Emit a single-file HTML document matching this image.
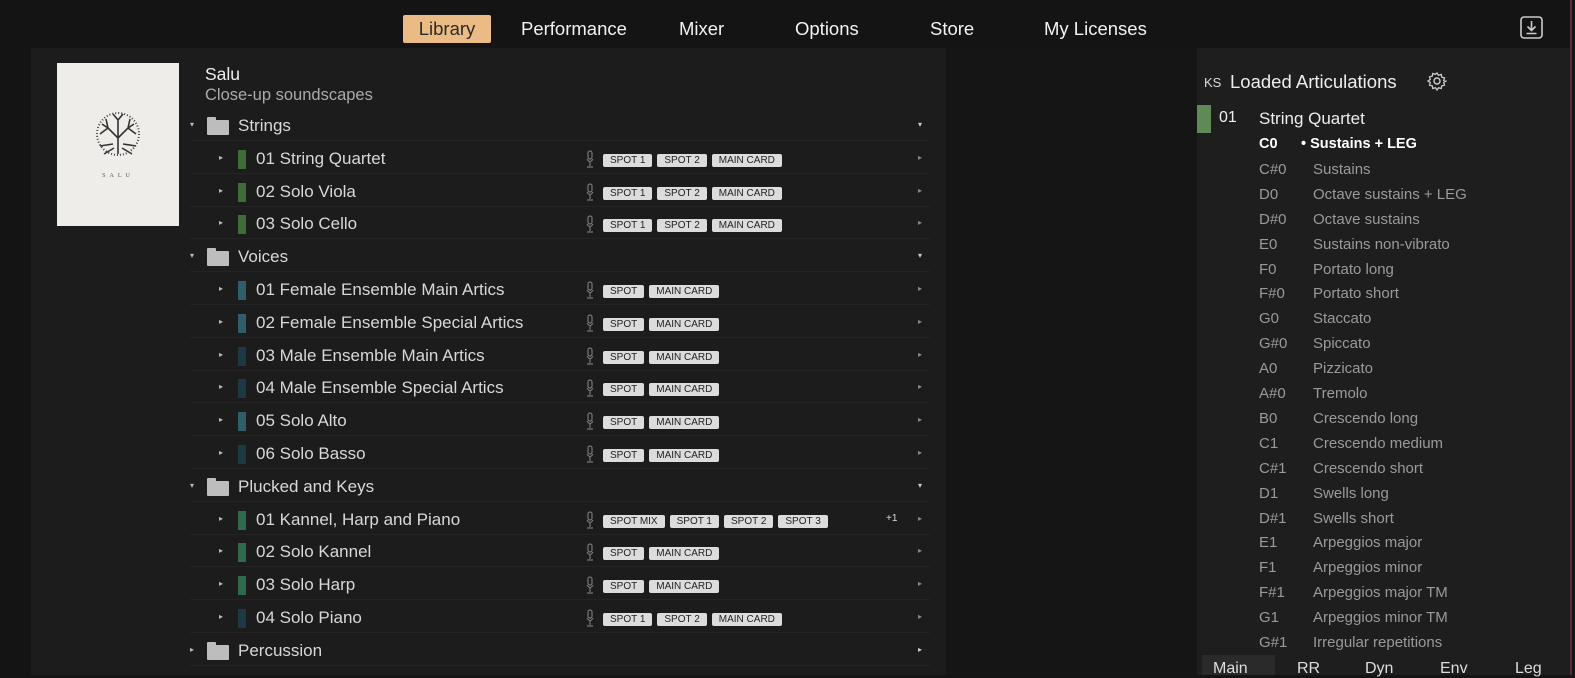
<!DOCTYPE html>
<html><head><meta charset="utf-8"><style>
*{margin:0;padding:0;box-sizing:border-box}
body{width:1575px;height:675px;overflow:hidden;background:#141414;font-family:"Liberation Sans",sans-serif;color:#e6e6e6;position:relative}
.a{position:absolute;white-space:nowrap}
.nav{top:15px;height:28px;line-height:28px;font-size:18.5px;color:#f2f2f2}
.main{left:31px;top:48px;width:915px;height:627px;background:#1c1c1c}
.right{left:1197px;top:48px;width:374px;height:627px;background:#1e1e1e}
.row{left:190px;width:740px;height:33px;border-bottom:1px solid #242424}
.row .t{position:absolute;left:66px;top:8px;font-size:17px;color:#d8d8d8}
.row .bar{position:absolute;left:48px;top:9px;width:8px;height:19px}
.row .tri{position:absolute;left:29px;top:12px;font-size:8px;color:#bbb}
.row .rt{position:absolute;right:8px;top:12px;font-size:8px;color:#888}
.row .mic{position:absolute;left:396px;top:9px;width:8px;height:18px}
.row .tags{position:absolute;left:413px;top:13px;display:flex;gap:5px}
.tag{background:#dcdcdc;color:#222;font-size:10px;height:13px;line-height:13px;padding:0 7px;border-radius:2px}
.fold .t{left:48px;color:#d8d8d8}
.fold .tri{left:0}
.folder{position:absolute;left:17px;top:12px;width:22px;height:15px;background:#bdbdbd;border-radius:1px}
.folder:before{content:"";position:absolute;left:0;top:-3px;width:9px;height:4px;background:#bdbdbd;border-radius:1px 1px 0 0}
.ar{left:1259px;font-size:15px;color:#9a9a9a}
.ar span{position:absolute;left:54px}
.tab{top:660px;font-size:16px;color:#ddd}
</style></head><body>
<div class="a main"></div>
<div class="a" style="left:946px;top:48px;width:251px;height:627px;background:#151515"></div>
<div class="a right"></div>
<div class="a" style="left:1570px;top:0;width:2px;height:675px;background:#5a2a40"></div>

<div class="a nav" style="left:403px;width:88px;background:#ebbb85;color:#2a2a2a;border-radius:2px;text-align:center">Library</div>
<div class="a nav" style="left:521px">Performance</div>
<div class="a nav" style="left:679px">Mixer</div>
<div class="a nav" style="left:795px">Options</div>
<div class="a nav" style="left:930px">Store</div>
<div class="a nav" style="left:1044px">My Licenses</div>
<svg class="a" style="left:1520px;top:16px" width="23" height="23" viewBox="0 0 23 23"><rect x="1" y="1" width="21" height="21" rx="3" fill="none" stroke="#ccc" stroke-width="1.6"/><path d="M11.5 5v9M7.5 10.5l4 4 4-4M6.5 17.5h10" fill="none" stroke="#ccc" stroke-width="1.6"/></svg>

<div class="a" style="left:57px;top:63px;width:122px;height:163px;background:#efedea">
<svg style="position:absolute;left:37px;top:47px" width="48" height="48" viewBox="0 0 48 48"><g stroke="#333" stroke-width="1.6" fill="none"><path d="M24 44V28M24 28l-10-10M24 28l10-10M14 18l-6-4M14 18l-2-9M34 18l6-4M34 18l2-9M24 28V10M24 10l-5-6M24 10l5-6M19 34l-13 2M29 34l13 2M20 38l-10 6M28 38l10 6M14 18l-8 6M34 18l8 6"/></g><circle cx="24" cy="24" r="21" fill="none" stroke="#444" stroke-width="2" stroke-dasharray="1 2"/></svg>
<div style="position:absolute;left:0;width:122px;top:110px;text-align:center;font-size:6px;letter-spacing:4px;color:#555;font-family:'Liberation Serif',serif">SALU</div>
</div>
<div class="a" style="left:205px;top:64px;font-size:17.5px;color:#eee">Salu</div>
<div class="a" style="left:205px;top:86px;font-size:16.5px;color:#aaa">Close-up soundscapes</div>

<div id="list"></div>

<div class="a" style="left:1204px;top:75px;font-size:13px;color:#ddd">KS</div>
<div class="a" style="left:1230px;top:71px;font-size:18.5px;color:#eee">Loaded Articulations</div>
<svg class="a" style="left:1427px;top:71px" width="20" height="20" viewBox="0 0 20 20"><circle cx="10" cy="10" r="3" fill="none" stroke="#ccc" stroke-width="1.4"/><path d="M10 2l1.5 2.3 2.7-.8.6 2.7 2.7.6-.8 2.7L19 10l-2.3 1.5.8 2.7-2.7.6-.6 2.7-2.7-.8L10 19l-1.5-2.3-2.7.8-.6-2.7-2.7-.6.8-2.7L1 10l2.3-1.5-.8-2.7 2.7-.6.6-2.7 2.7.8z" fill="none" stroke="#ccc" stroke-width="1.3"/></svg>
<div class="a" style="left:1197px;top:105px;width:14px;height:28px;background:#5f8a55"></div>
<div class="a" style="left:1219px;top:109px;font-size:16px;color:#eee">01</div>
<div class="a" style="left:1259px;top:109px;font-size:17px;color:#eee">String Quartet</div>
<div id="arts"></div>

<div class="a" style="left:1202px;top:655px;width:73px;height:20px;background:#2a2a2a"></div>
<div class="a tab" style="left:1213px">Main</div>
<div class="a tab" style="left:1297px">RR</div>
<div class="a tab" style="left:1365px">Dyn</div>
<div class="a tab" style="left:1440px">Env</div>
<div class="a tab" style="left:1515px">Leg</div>

<script>
const G='#3f6b38',T='#2f5d68',D='#1f3943',P='#2e6a4c';
const S3=['SPOT 1','SPOT 2','MAIN CARD'],S2=['SPOT','MAIN CARD'];
const rows=[
['f','Strings','▾'],['r','01 String Quartet',G,S3],['r','02 Solo Viola',G,S3],['r','03 Solo Cello',G,S3],
['f','Voices','▾'],['r','01 Female Ensemble Main Artics',T,S2],['r','02 Female Ensemble Special Artics',T,S2],['r','03 Male Ensemble Main Artics',D,S2],['r','04 Male Ensemble Special Artics',D,S2],['r','05 Solo Alto',T,S2],['r','06 Solo Basso',D,S2],
['f','Plucked and Keys','▾'],['r','01  Kannel, Harp and Piano',P,['SPOT MIX','SPOT 1','SPOT 2','SPOT 3'],1],['r','02 Solo Kannel',P,S2],['r','03 Solo Harp',P,S2],['r','04 Solo Piano',D,S3],
['f','Percussion','▸']];
let h='';
rows.forEach((r,i)=>{const y=108+i*32.8;
if(r[0]=='f'){h+=`<div class="a row fold" style="top:${y}px"><span class="tri">${r[2]}</span><div class="folder"></div><span class="t">${r[1]}</span><span class="rt" style="color:#ccc">${r[2]=='▾'?'▾':'▸'}</span></div>`}
else{h+=`<div class="a row" style="top:${y}px"><span class="tri">▸</span><div class="bar" style="background:${r[2]}"></div><span class="t">${r[1]}</span>
<svg class="mic" viewBox="0 0 8 18"><rect x="2" y="1" width="4" height="8" rx="2" fill="none" stroke="#777" stroke-width="1.2"/><path d="M1 9q3 5 6 0M4 12v4M1 17h6" fill="none" stroke="#777" stroke-width="1.2"/></svg>
<div class="tags">${r[3].map(t=>`<span class="tag">${t}</span>`).join('')}</div>${r[4]?'<span class="a" style="left:696px;top:11px;font-size:10px;color:#ddd">+1</span>':''}<span class="rt">▸</span></div>`}});
document.getElementById('list').innerHTML=h;
const A=[['C0','Sustains + LEG'],['C#0','Sustains'],['D0','Octave sustains + LEG'],['D#0','Octave sustains'],['E0','Sustains non-vibrato'],['F0','Portato long'],['F#0','Portato short'],['G0','Staccato'],['G#0','Spiccato'],['A0','Pizzicato'],['A#0','Tremolo'],['B0','Crescendo long'],['C1','Crescendo medium'],['C#1','Crescendo short'],['D1','Swells long'],['D#1','Swells short'],['E1','Arpeggios major'],['F1','Arpeggios minor'],['F#1','Arpeggios major TM'],['G1','Arpeggios minor TM'],['G#1','Irregular repetitions']];
let a='';A.forEach((x,i)=>{const y=136+i*24.9;const f=i==0;
a+=`<div class="a ar" style="top:${y}px;${f?'color:#fff;font-weight:bold;font-size:14.5px':''}">${x[0]}<span style="${f?'left:42px':''}">${f?'• ':''}${x[1]}</span></div>`});
document.getElementById('arts').innerHTML=a;
</script>
</body></html>
